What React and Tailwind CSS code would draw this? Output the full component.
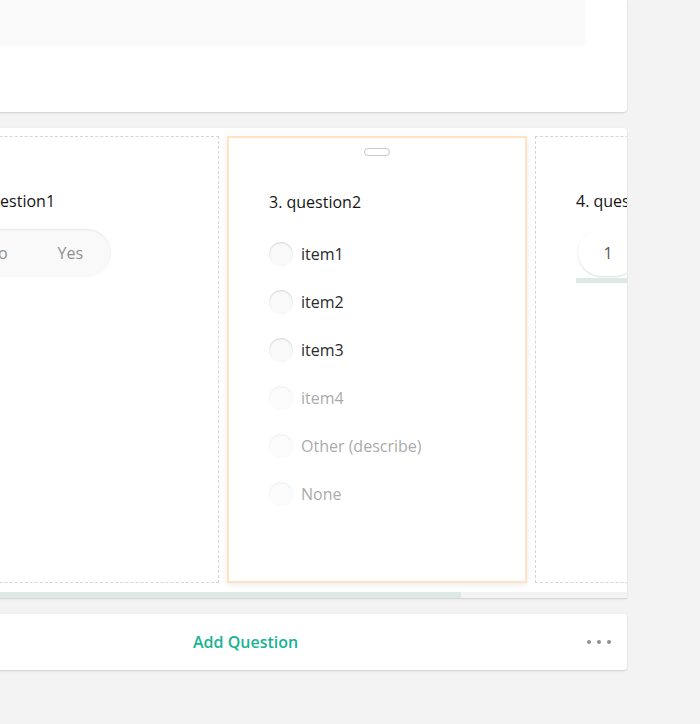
import React from 'react';

const ITEMS = [
  { label: 'item1', muted: false },
  { label: 'item2', muted: false },
  { label: 'item3', muted: false },
  { label: 'item4', muted: true },
  { label: 'Other (describe)', muted: true },
  { label: 'None', muted: true },
];

function RadioItem({ label, muted }) {
  return (
    <div className={`flex items-center h-[48px] gap-2 ${muted ? 'opacity-40' : ''}`}>
      <span className="w-6 h-6 rounded-full bg-[#f9f9f9] shadow-[inset_0_1px_2px_rgba(0,0,0,0.15)]" />
      <span className="text-[16px] text-[#2a2a2a]">{label}</span>
    </div>
  );
}

export default function App() {
  return (
    <div className="h-[724px] bg-[#f3f3f3] overflow-hidden" style={{ fontFamily: '"Open Sans", sans-serif' }}>
      <div className="ml-[-137px] w-[764px]">
        {/* top panel */}
        <div className="h-[112px] bg-white rounded-br-[4px] shadow-[0_1px_2px_rgba(0,0,0,0.15)] pr-[42px]">
          <div className="h-[45px] bg-[#f9f9f9] rounded-br-[3px] shadow-[0_1px_0_rgba(0,0,0,0.02)]" />
        </div>

        {/* question row */}
        <div className="mt-4 h-[470px] bg-white rounded-tr-[4px] shadow-[0_1px_2px_rgba(0,0,0,0.15)] overflow-hidden flex flex-col">
          <div className="flex gap-2 pl-[56px] pt-2 h-[464px]">
            {/* card 1 */}
            <div className="shrink-0 w-[300px] h-[447px] border border-dashed border-[#d6d6d6] pl-[40px] pt-[52px]">
              <div className="pl-[3px] text-[16px] font-medium text-[#161616] leading-6">2. question1</div>
              <div className="mt-4 flex w-[151px] h-[48px] rounded-full bg-[#f9f9f9] shadow-[inset_0_1px_2px_rgba(0,0,0,0.08)] text-[16px] text-[#909090]">
                <span className="flex-1 flex items-center justify-center">No</span>
                <span className="flex-1 flex items-center justify-center pr-[4px]">Yes</span>
              </div>
            </div>

            {/* card 2 (selected) */}
            <div className="shrink-0 w-[300px] h-[447px] border-2 border-[#ffe3c2] shadow-[0_2px_6px_rgba(0,0,0,0.08)] flex flex-col">
              <div className="flex justify-center pt-[10px]">
                <span className="w-[26px] h-[8px] rounded-full border border-[#c8c8c8]" />
              </div>
              <div className="pl-[40px] pt-[34px]">
                <div className="text-[16px] font-medium text-[#161616] leading-6">3. question2</div>
                <div className="mt-[16px]">
                  {ITEMS.map((it) => (
                    <RadioItem key={it.label} {...it} />
                  ))}
                </div>
              </div>
            </div>

            {/* card 3 */}
            <div className="shrink-0 w-[300px] h-[447px] border border-dashed border-[#d6d6d6] pl-[40px] pt-[52px]">
              <div className="text-[16px] font-medium text-[#161616] leading-6 whitespace-nowrap">4. question3</div>
              <div className="mt-[16px] w-[200px]">
                <div className="flex">
                  <span className="ml-[2px] w-[60px] h-[47px] rounded-full bg-white shadow-[0_1px_2px_rgba(0,0,0,0.15)] flex items-center justify-center text-[16px] text-[#555]">1</span>
                </div>
                <div className="mt-[2px] h-[5px] bg-[#dde9e5]" />
              </div>
            </div>
          </div>
          <div className="h-[6px] bg-[#f3f3f3]">
            <div className="h-full w-[598px] bg-[#dde9e5]" />
          </div>
        </div>

        {/* add question bar */}
        <div className="mt-4 h-[56px] bg-white rounded-r-[4px] shadow-[0_1px_2px_rgba(0,0,0,0.15)] flex items-center justify-between pl-[330px] pr-[16px]">
          <span className="text-[16px] font-semibold text-[#19b394]">Add Question</span>
          <span className="flex gap-[6px]">
            <span className="w-[4px] h-[4px] rounded-full bg-[#909090]" />
            <span className="w-[4px] h-[4px] rounded-full bg-[#909090]" />
            <span className="w-[4px] h-[4px] rounded-full bg-[#909090]" />
          </span>
        </div>
      </div>
    </div>
  );
}
